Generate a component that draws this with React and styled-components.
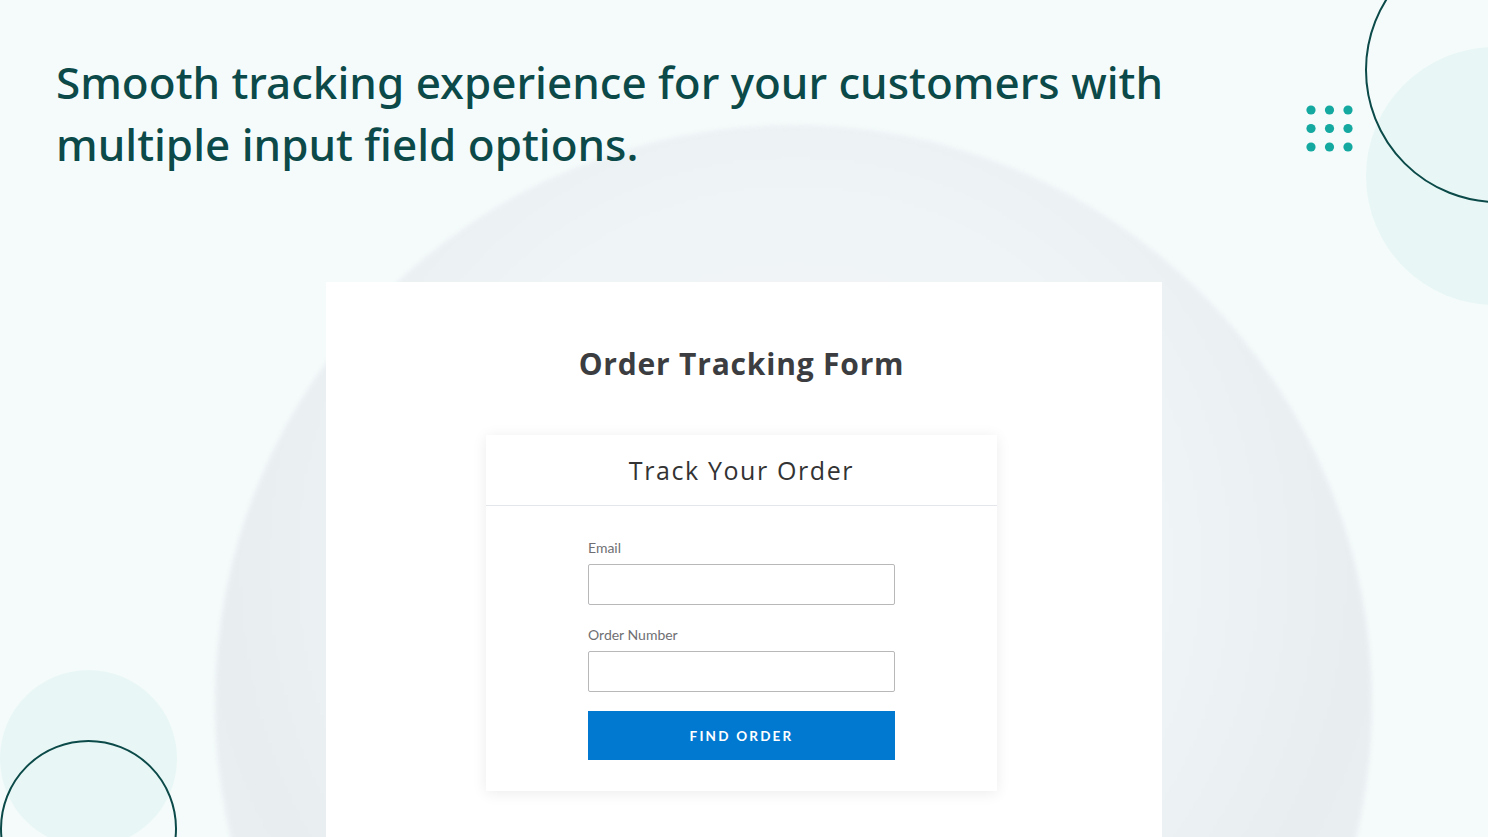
import React from 'react';
import styled, { createGlobalStyle } from 'styled-components';

const GlobalStyle = createGlobalStyle`
  html, body {
    margin: 0;
    padding: 0;
    background: #f5fbfb;
  }
  * {
    box-sizing: border-box;
  }
`;

const Page = styled.div`
  position: relative;
  width: 1488px;
  height: 837px;
  overflow: hidden;
  background: #f5fbfb;
  font-family: 'Lato', 'Liberation Sans', sans-serif;
`;

const BigCircle = styled.div`
  position: absolute;
  left: 215px;
  top: 125px;
  width: 1157px;
  height: 1157px;
  border-radius: 50%;
  background: radial-gradient(circle at 50% 38%, #f3f7f8 0%, #eff4f6 40%, #e8edf0 62%, #ebf0f2 72%);
  filter: blur(2px);
`;

const Blob = styled.div`
  position: absolute;
  left: ${p => p.x}px;
  top: ${p => p.y}px;
  width: ${p => p.size}px;
  height: ${p => p.size}px;
  border-radius: 50%;
  background: #e8f7f5;
`;

const Ring = styled.div`
  position: absolute;
  left: ${p => p.x}px;
  top: ${p => p.y}px;
  width: ${p => p.size}px;
  height: ${p => p.size}px;
  border-radius: 50%;
  border: 2.5px solid #0b4a49;
`;

const DotGrid = styled.svg`
  position: absolute;
  left: 1302px;
  top: 101px;
`;

const Content = styled.div`
  position: relative;
  display: flex;
  flex-direction: column;
  align-items: center;
`;

const Headline = styled.h1`
  align-self: flex-start;
  margin: 51px 0 0 56px;
  font-family: 'Noto Sans', 'Lato', sans-serif;
  font-size: 44px;
  font-weight: 500;
  line-height: 62px;
  letter-spacing: 0;
  color: #0b4a49;
`;

const Panel = styled.div`
  margin-top: 107px;
  width: 836px;
  height: 600px;
  background: #ffffff;
  display: flex;
  flex-direction: column;
  align-items: center;
  padding-top: 62px;
  padding-right: 5px;
`;

const PanelTitle = styled.h2`
  margin: 0;
  font-family: 'Open Sans', 'Liberation Sans', sans-serif;
  font-size: 30px;
  font-weight: 700;
  letter-spacing: 0.8px;
  color: #3b3d40;
  line-height: 40px;
`;

const Card = styled.div`
  margin-top: 51px;
  width: 511px;
  background: #ffffff;
  box-shadow: 0 2px 14px rgba(0, 0, 0, 0.08);
`;

const CardHeader = styled.div`
  height: 71px;
  display: flex;
  align-items: center;
  justify-content: center;
  border-bottom: 1px solid #e3e6ea;
  font-family: 'Open Sans', 'Liberation Sans', sans-serif;
  font-size: 25px;
  font-weight: 400;
  letter-spacing: 1.6px;
  color: #333;
`;

const Form = styled.form`
  width: 307px;
  margin: 0 auto;
  padding: 34px 0 31px;
  display: flex;
  flex-direction: column;
`;

const Label = styled.label`
  font-size: 14px;
  color: #6f6f73;
  line-height: 16px;
  margin-bottom: 8px;
`;

const Input = styled.input`
  width: 100%;
  height: 41px;
  border: 1.5px solid #b8b8bb;
  border-radius: 2px;
  background: #fff;
  margin-bottom: ${p => p.gap}px;
`;

const Button = styled.button`
  height: 49px;
  border: none;
  background: #0279d1;
  color: #fff;
  font-family: 'Lato', 'Liberation Sans', sans-serif;
  font-weight: 700;
  font-size: 13.5px;
  letter-spacing: 2.2px;
  text-transform: uppercase;
`;

const dots = [];
for (let r = 0; r < 3; r++) {
  for (let c = 0; c < 3; c++) {
    dots.push([9 + c * 18.5, 9 + r * 18.5]);
  }
}

export default function App() {
  return (
    <Page>
      <GlobalStyle />
      <BigCircle />
      <Blob x={1366} y={47} size={258} />
      <Ring x={1365} y={-63} size={266} />
      <DotGrid width="56" height="56" viewBox="0 0 56 56">
        {dots.map(([x, y], i) => (
          <circle key={i} cx={x} cy={y} r="4.6" fill="#13a8a0" />
        ))}
      </DotGrid>
      <Blob x={0} y={670} size={177} />
      <Ring x={0} y={740} size={177} />
      <Content>
        <Headline>
          Smooth tracking experience for your customers with
          <br />
          multiple input field options.
        </Headline>
        <Panel>
          <PanelTitle>Order Tracking Form</PanelTitle>
          <Card>
            <CardHeader>Track Your Order</CardHeader>
            <Form onSubmit={e => e.preventDefault()}>
              <Label>Email</Label>
              <Input type="email" gap={22} />
              <Label>Order Number</Label>
              <Input type="text" gap={19} />
              <Button type="submit">Find Order</Button>
            </Form>
          </Card>
        </Panel>
      </Content>
    </Page>
  );
}
